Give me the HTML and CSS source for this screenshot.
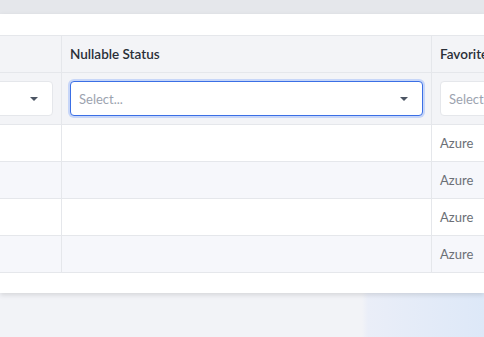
FILE: index.html
```html
<!DOCTYPE html>
<html lang="en">
<head>
<meta charset="utf-8">
<title>Grid</title>
<link rel="stylesheet" href="styles.css">
</head>
<body>
<div class="topbar"></div>
<div class="card">
  <div class="toolbar"></div>
  <div class="scroller">
    <div class="grid">
      <div class="cell head">Status</div>
      <div class="cell head">Nullable Status</div>
      <div class="cell head">Favorite Color</div>

      <div class="cell filter"><div class="select"><span class="ph">Select...</span><span class="caret"></span></div></div>
      <div class="cell filter"><div class="select focused"><span class="ph">Select...</span><span class="caret"></span></div></div>
      <div class="cell filter"><div class="select"><span class="ph">Select...</span><span class="caret"></span></div></div>

      <div class="cell"></div><div class="cell"></div><div class="cell">Azure</div>
      <div class="cell alt"></div><div class="cell alt"></div><div class="cell alt">Azure</div>
      <div class="cell"></div><div class="cell"></div><div class="cell">Azure</div>
      <div class="cell alt"></div><div class="cell alt"></div><div class="cell alt">Azure</div>
    </div>
  </div>
  <div class="footer"></div>
</div>
</body>
</html>
```

FILE: styles.css
```css
* { box-sizing: border-box; }
html, body {
  margin: 0;
  padding: 0;
  width: 484px;
  height: 337px;
  overflow: hidden;
}
body {
  font-family: "Lato", "Noto Sans", sans-serif;
  background:
    linear-gradient(90deg, #f2f3f7 0, #f2f3f7 362px, #eaeef8 368px, #dde8f8 484px);
}
.topbar {
  height: 14px;
  background: #e5e7eb;
}
.card {
  background: #ffffff;
  box-shadow: 0 2px 5px rgba(0, 0, 0, 0.12);
  overflow: hidden;
}
.toolbar {
  height: 21px;
}
.scroller {
  overflow: hidden;
  border-top: 1px solid #e5e7eb;
}
.grid {
  display: grid;
  grid-template-columns: 202px 370px 240px;
  width: 812px;
  margin-left: -140px;
}
.cell {
  height: 37px;
  border-right: 1px solid #e5e7eb;
  border-bottom: 1px solid #e5e7eb;
  padding: 0 8px;
  display: flex;
  align-items: center;
  font-size: 13px;
  color: #6b6f76;
  background: #ffffff;
  white-space: nowrap;
}
.cell.alt { background: #f6f7fb; }
.cell.head {
  background: #f3f4f7;
  color: #2a2f38;
  font-weight: 600;
  font-size: 13.5px;
}
.cell.filter {
  height: 52px;
  background: #f3f4f7;
  padding: 8px;
}
.select {
  width: 100%;
  height: 35px;
  background: #ffffff;
  border: 1px solid #e5e7eb;
  border-radius: 4px;
  display: flex;
  align-items: center;
  justify-content: space-between;
  padding: 0 14px 0 8px;
}
.select.focused {
  border-color: #3b6fe5;
  box-shadow: 0 0 0 2px #c7d6f8;
}
.ph {
  font-size: 13px;
  color: #9ca3af;
}
.caret {
  width: 0;
  height: 0;
  border-left: 4px solid transparent;
  border-right: 4px solid transparent;
  border-top: 4px solid #4b5563;
}
.footer {
  height: 20px;
}
```
